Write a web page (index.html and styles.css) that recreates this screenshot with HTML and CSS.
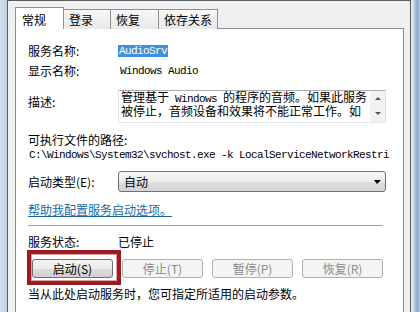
FILE: index.html
```html
<!DOCTYPE html>
<html lang="zh-CN">
<head>
<meta charset="utf-8">
<title>Windows Audio 的属性</title>
<link rel="stylesheet" href="styles.css">
</head>
<body>
<div class="dialog">
  <div class="tabs">
    <div class="tab active">常规</div>
    <div class="tab">登录</div>
    <div class="tab">恢复</div>
    <div class="tab wide">依存关系</div>
  </div>
  <div class="panel">
    <div class="row r-name"><span class="label">服务名称:</span><span class="mono sel">AudioSrv</span></div>
    <div class="row r-display"><span class="label">显示名称:</span><span class="mono value">Windows Audio</span></div>
    <div class="row r-desc">
      <span class="label">描述:</span>
      <div class="descbox">
        <div class="desctext">管理基于<span class="mono"> Windows </span>的程序的音频。如果此服务<br>被停止，音频设备和效果将不能正常工作。如</div>
        <div class="vscroll"><span class="sbtn"><i class="up"></i></span><span class="sbtn"><i class="down"></i></span></div>
      </div>
    </div>
    <div class="pathlabel">可执行文件的路径:</div>
    <div class="path mono">C:\Windows\System32\svchost.exe -k LocalServiceNetworkRestri</div>
    <div class="row r-type">
      <span class="label">启动类型(E):</span>
      <div class="combo"><span>自动</span><i class="arrow"></i></div>
    </div>
    <a class="helplink" href="#">帮助我配置服务启动选项。</a>
    <div class="sep"></div>
    <div class="row r-status"><span class="label">服务状态:</span><span>已停止</span></div>
    <div class="buttons">
      <div class="btnwrap"><button class="btn">启动(S)</button><span class="mark"></span></div>
      <button class="btn" disabled>停止(T)</button>
      <button class="btn" disabled>暂停(P)</button>
      <button class="btn" disabled>恢复(R)</button>
    </div>
    <div class="hint">当从此处启动服务时，您可指定所适用的启动参数。</div>
  </div>
</div>
</body>
</html>
```

FILE: styles.css
```css
body {
    margin: 0;
    width: 420px;
    height: 312px;
    overflow: hidden;
    background: linear-gradient(90deg, #d5e1ec 0, #c3d3e4 7px, #c3d3e4 411px, #eef3f8 412px, #a9c3dc 415px, #86a8ca 418px, #c4d6e8 420px);
    font-family: "Noto Sans CJK SC", sans-serif;
    font-size: 12px;
    color: #000;
}

.dialog {
    margin-left: 7px;
    width: 404px;
    height: 312px;
    box-sizing: border-box;
    border: 1px solid #5a5f66;
    border-bottom: none;
    background: #f0f0f0;
    padding: 6px 6px 0 7px;
}

/* tab strip */
.tabs {
    display: flex;
    align-items: flex-end;
    height: 22px;
}

.tab {
    box-sizing: border-box;
    height: 20px;
    width: 49px;
    margin-left: -1px;
    padding: 2px 0 0 5px;
    line-height: 16px;
    border: 1px solid #8e9093;
    border-bottom: none;
    background: linear-gradient(#f7f7f7, #e9e9e9);
}

.tab.active {
    position: relative;
    z-index: 1;
    height: 22px;
    margin-left: 0;
    padding: 4px 0 0 6px;
    background: #fff;
}

.tab.wide {
    width: 60px;
}

.tabs .tab:nth-child(2) {
    width: 48px;
}

.panel {
    margin-top: -1px;
    height: 284px;
    box-sizing: border-box;
    border: 1px solid #898c95;
    border-bottom: none;
    background: #fff;
    padding: 14px 17px 0 12px;
}

.row {
    display: flex;
    align-items: center;
    line-height: 16px;
}

.label {
    flex: none;
    width: 90px;
}

.mono {
    font-family: "Liberation Mono", monospace;
    font-size: 11px;
    letter-spacing: -0.6px;
}

.sel {
    background: #3f8fdc;
    color: #fff;
    padding: 0 1px 0 1px;
    line-height: 12px;
}

.value {
    margin-left: 2px;
}

.r-display {
    margin-top: 4px;
}

.r-desc {
    margin-top: 11px;
    align-items: flex-start;
}

.r-desc .label {
    padding-top: 4px;
}

.descbox {
    display: flex;
    width: 268px;
    height: 33px;
    box-sizing: border-box;
    border: 1px solid;
    border-color: #abadb3 #dbdfe6 #e3e9ef #e2e3ea;
}

.desctext {
    flex: 1;
    padding: 0 0 0 2px;
    line-height: 12px;
    white-space: nowrap;
}

.vscroll {
    width: 15px;
    display: flex;
    flex-direction: column;
    background: #f2f2f2;
}

.sbtn {
    height: 15px;
    display: flex;
    align-items: center;
    justify-content: center;
}

.up {
    border-left: 3px solid transparent;
    border-right: 3px solid transparent;
    border-bottom: 3px solid #555;
}

.down {
    border-left: 3px solid transparent;
    border-right: 3px solid transparent;
    border-top: 3px solid #555;
}

.pathlabel {
    margin-top: 10px;
    line-height: 14px;
}

.path {
    margin-top: 1px;
    margin-left: 1px;
    line-height: 14px;
    white-space: nowrap;
}

.r-type {
    margin-top: 9px;
}

.combo {
    display: flex;
    align-items: center;
    width: 268px;
    height: 21px;
    box-sizing: border-box;
    border: 1px solid #707070;
    border-radius: 3px;
    padding: 0 4px 0 5px;
    background: linear-gradient(#f6f6f6 0, #ececec 50%, #dedede 51%, #d4d4d4 100%);
}

.arrow {
    margin-left: auto;
    border-left: 3px solid transparent;
    border-right: 4px solid transparent;
    border-top: 4px solid #000;
}

.helplink {
    display: block;
    width: fit-content;
    margin-top: 10px;
    line-height: 16px;
    color: #1a69a3;
    text-decoration: underline;
}

.sep {
    margin: 7px 3px 0 0;
    height: 1px;
    background: #a0a0a0;
}

.r-status {
    margin-top: 8px;
}

.buttons {
    display: flex;
    gap: 9px;
    margin: 9px 0 0 4px;
}

.btnwrap {
    position: relative;
    display: flex;
}

.btn {
    width: 81px;
    height: 19px;
    padding: 0;
    box-sizing: border-box;
    border: 1px solid #707070;
    border-radius: 3px;
    background: linear-gradient(#f3f3f3 0, #ebebeb 50%, #dddddd 51%, #cfcfcf 100%);
    font-family: "Noto Sans CJK SC", sans-serif;
    font-size: 12px;
    line-height: 16px;
    color: #000;
}

.btn:disabled {
    border-color: #adb2b5;
    background: #f4f4f4;
    color: #8a8a8a;
}

/* red annotation frame around the start button */
.mark {
    position: absolute;
    left: -5px;
    top: -9px;
    width: 94px;
    height: 35px;
    box-sizing: border-box;
    border: 4px solid #9c1a1f;
    box-shadow: inset 0 0 0 1px #d9a5a5;
}

.hint {
    margin-top: 8px;
    line-height: 16px;
}
```
